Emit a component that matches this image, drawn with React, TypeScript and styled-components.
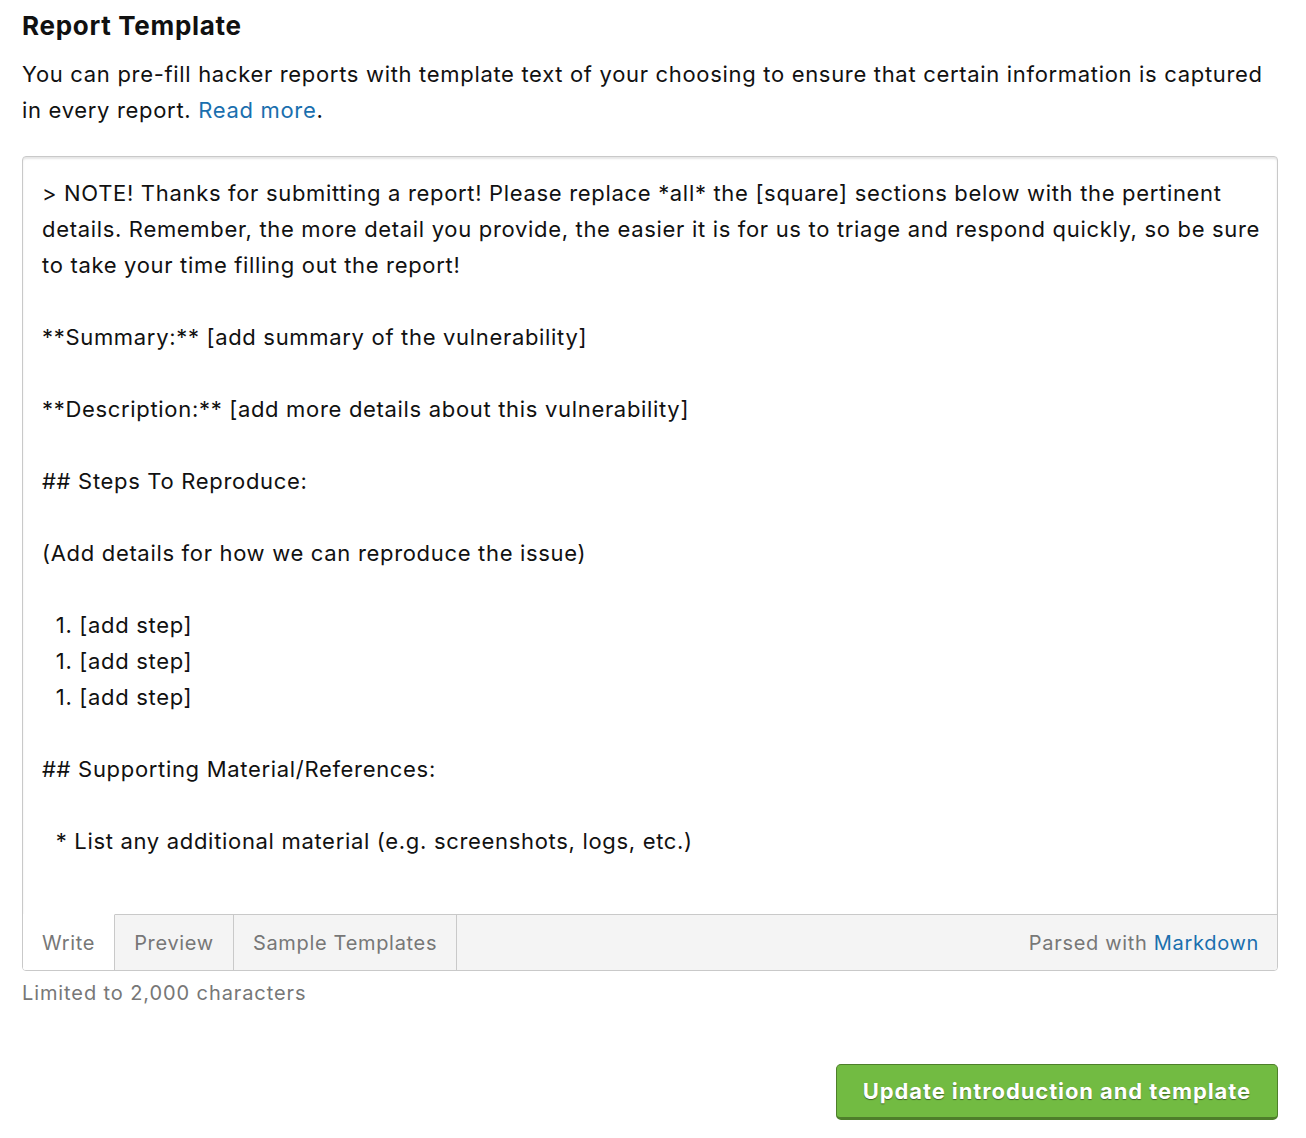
import React from "react";
import styled, { createGlobalStyle } from "styled-components";

const GlobalStyle = createGlobalStyle`
  body {
    margin: 0;
    background: #fff;
    font-family: Inter, "Open Sans", "Liberation Sans", sans-serif;
    letter-spacing: 0.68px;
    color: #111;
  }
`;

const Page = styled.div`
  padding: 8px 28px 18px 22px;
`;

const Title = styled.h2`
  margin: 0;
  font-size: 26px;
  line-height: 36px;
  font-weight: 700;
  letter-spacing: 0.7px;
  color: #111;
`;

const Lead = styled.p`
  margin: 12px 0 0;
  font-size: 22px;
  line-height: 36px;
`;

const Link = styled.a`
  color: #1a6fae;
  text-decoration: none;
`;

const Editor = styled.div`
  margin-top: 28px;
  border: 1px solid #c9c9c9;
  border-radius: 4px;
  box-shadow: inset 0 2px 2px rgba(0, 0, 0, 0.1);
  overflow: hidden;
`;

const Area = styled.textarea`
  display: block;
  box-sizing: border-box;
  width: 100%;
  height: 757px;
  margin: 0;
  padding: 18px 10px 18px 19px;
  border: 0;
  resize: none;
  background: transparent;
  font-family: inherit;
  font-size: 22px;
  line-height: 36px;
  letter-spacing: inherit;
  color: #111;
  outline: none;
  overflow: hidden;
`;

const TabBar = styled.div`
  display: flex;
  background: #f4f4f4;
  height: 56px;
`;

const Tab = styled.div<{ $active?: boolean }>`
  display: flex;
  align-items: center;
  padding: 0 19px;
  font-size: 20px;
  color: #777;
  background: ${(p) => (p.$active ? "#fff" : "#f4f4f4")};
  border-top: 1px solid ${(p) => (p.$active ? "transparent" : "#c9c9c9")};
  border-right: 1px solid #c9c9c9;
`;

const Filler = styled.div`
  flex: 1;
  display: flex;
  align-items: center;
  justify-content: flex-end;
  padding: 0 18px;
  font-size: 20px;
  color: #777;
  border-top: 1px solid #c9c9c9;
`;

const Hint = styled.div`
  margin-top: 8px;
  font-size: 20px;
  line-height: 28px;
  letter-spacing: 0.9px;
  color: #777;
`;

const Actions = styled.div`
  display: flex;
  justify-content: flex-end;
  margin-top: 57px;
`;

const Button = styled.button`
  height: 56px;
  padding: 0 26px;
  font-family: inherit;
  font-size: 22px;
  font-weight: 700;
  letter-spacing: 0.9px;
  color: #fff;
  text-shadow: 0 1px 1px rgba(0, 0, 0, 0.45);
  background: #72bb42;
  border: 1px solid #4e7f2b;
  border-bottom-width: 3px;
  border-radius: 5px;
  cursor: pointer;
`;

const template = `> NOTE! Thanks for submitting a report! Please replace *all* the [square] sections below with the pertinent details. Remember, the more detail you provide, the easier it is for us to triage and respond quickly, so be sure to take your time filling out the report!

**Summary:** [add summary of the vulnerability]

**Description:** [add more details about this vulnerability]

## Steps To Reproduce:

(Add details for how we can reproduce the issue)

  1. [add step]
  1. [add step]
  1. [add step]

## Supporting Material/References:

  * List any additional material (e.g. screenshots, logs, etc.)`;

export default function App() {
  return (
    <Page>
      <GlobalStyle />
      <Title>Report Template</Title>
      <Lead>
        You can pre-fill hacker reports with template text of your choosing to
        ensure that certain information is captured in every report.{" "}
        <Link href="#">Read more</Link>.
      </Lead>
      <Editor>
        <Area defaultValue={template} readOnly />
        <TabBar>
          <Tab $active>Write</Tab>
          <Tab>Preview</Tab>
          <Tab>Sample Templates</Tab>
          <Filler>
            Parsed with&nbsp;<Link href="#">Markdown</Link>
          </Filler>
        </TabBar>
      </Editor>
      <Hint>Limited to 2,000 characters</Hint>
      <Actions>
        <Button>Update introduction and template</Button>
      </Actions>
    </Page>
  );
}
